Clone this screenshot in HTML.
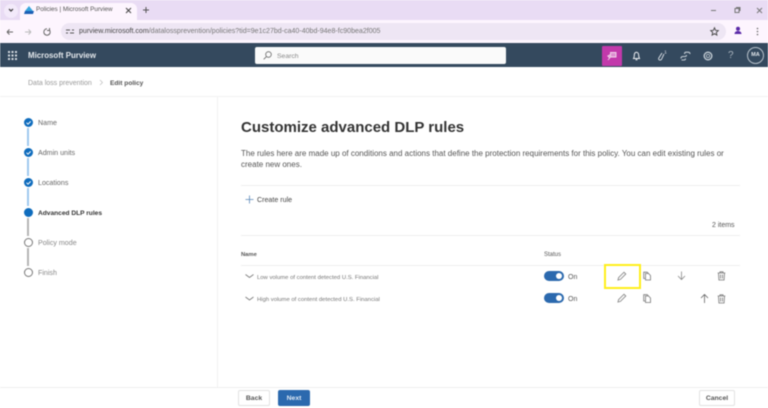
<!DOCTYPE html>
<html><head><meta charset="utf-8">
<style>
*{box-sizing:border-box}
html,body{margin:0;padding:0;background:#fff}
#p{position:relative;width:768px;height:408px;overflow:hidden;background:#fff;font-family:"Liberation Sans",sans-serif;filter:blur(.55px);color:#333}
.a{position:absolute;white-space:nowrap}
svg.a{overflow:visible}
.d{position:absolute;left:24px;width:9px;height:9px;border-radius:50%;background:#0f6cbd}
.o{background:#fff;border:1.5px solid #777}
.l{position:absolute;left:27px;width:2px;height:18px;background:#9fc9ee}
.g{background:#b5b5b5}
.s{left:38px;font-size:7.1px;color:#666}
.t{position:absolute;width:20px;height:10px;border-radius:5px;background:#2b69ae}
.t:after{content:"";position:absolute;right:2px;top:2px;width:6px;height:6px;border-radius:50%;background:#fff}
.r{color:#777}
</style></head><body><div id="p">
<div class="a" style="left:0;top:0;width:768px;height:20px;background:#e9dcf4"></div>
<div class="a" style="left:4px;top:4px;width:14px;height:14px;border-radius:7px;background:#f3eafa"></div>
<svg class="a" style="left:8px;top:8px" width="6" height="5"><path d="M1 1l2 2 2-2" fill="none" stroke="#333" stroke-width="1.2"/></svg>
<div class="a" style="left:20px;top:3px;width:117px;height:18px;background:#fdf5fe;border-radius:6px 6px 0 0"></div>
<svg class="a" style="left:24px;top:6px" width="10" height="9"><path d="M5 0L1 5h8z" fill="#36a6dd"/><path d="M1 5l-1 3h9l1-3z" fill="#1b5fb5"/></svg>
<div class="a" style="left:36px;top:6px;font-size:6.3px;color:#555;line-height:8px">Policies | Microsoft Purview</div>
<svg class="a" style="left:125px;top:7px" width="7" height="7"><path d="M1 1l5 5M6 1l-5 5" stroke="#444" stroke-width="1"/></svg>
<svg class="a" style="left:142px;top:6px" width="8" height="8"><path d="M4 1v6M1 4h6" stroke="#555" stroke-width="1"/></svg>
<svg class="a" style="left:708px;top:7px" width="50" height="7"><path d="M3 3.5h5" stroke="#777"/><path d="M27 1.5h4v4h-4z M28.5 1v-.5h3.500v3.500" fill="none" stroke="#777"/><path d="M50 1l5 5M55 1l-5 5" stroke="#777" transform="translate(-1,0)"/></svg>
<div class="a" style="left:0;top:20px;width:768px;height:23px;background:#fdf5fe"></div>
<svg class="a" style="left:7px;top:27px" width="50" height="10"><path d="M0 5h6M0 5l2.500-2.500M0 5l2.500 2.500" fill="none" stroke="#666"/><path d="M18 5h6M24 5l-2.500-2.500M24 5l-2.500 2.500" fill="none" stroke="#bbb"/><path d="M40 1.800a3.200 3.200 0 1 0 2.500 1.200M42.500 1v2.500h-2.500" fill="none" stroke="#666"/></svg>
<div class="a" style="left:61px;top:23px;width:665px;height:17px;border-radius:9px;background:#eee6f4"></div>
<svg class="a" style="left:66px;top:28px" width="8" height="7"><path d="M0 2h4M6 2h2M0 5h2M4 5h4" stroke="#555"/></svg>
<div class="a" style="left:79px;top:27px;font-size:7.05px;line-height:9px;color:#777"><span style="color:#444">purview.microsoft.com</span>/datalossprevention/policies?tid=9e1c27bd-ca40-40bd-94e8-fc90bea2f005</div>
<svg class="a" style="left:710px;top:27px" width="9" height="9"><path d="M4.500.8l1.100 2.500 2.700.3-2 1.800.6 2.700-2.400-1.400-2.400 1.400.6-2.700-2-1.800 2.700-.3z" fill="none" stroke="#444" stroke-width=".9"/></svg>
<svg class="a" style="left:734px;top:26px" width="8" height="9"><circle cx="4" cy="2.800" r="2" fill="#5b2aa8"/><path d="M.5 8c0-4 7-4 7 0z" fill="#5b2aa8"/></svg>
<svg class="a" style="left:756px;top:27px" width="3" height="9"><circle cx="1.500" cy="1.500" r=".8" fill="#666"/><circle cx="1.500" cy="4.500" r=".8" fill="#666"/><circle cx="1.500" cy="7.500" r=".8" fill="#666"/></svg>

<div class="a" style="left:0;top:43px;width:768px;height:24px;background:#34495e"></div>
<svg class="a" style="left:8px;top:51px" width="9" height="9" fill="#d5dbe1"><rect width="2" height="2"/><rect x="3.500" width="2" height="2"/><rect x="7" width="2" height="2"/><rect y="3.500" width="2" height="2"/><rect x="3.500" y="3.500" width="2" height="2"/><rect x="7" y="3.500" width="2" height="2"/><rect y="7" width="2" height="2"/><rect x="3.500" y="7" width="2" height="2"/><rect x="7" y="7" width="2" height="2"/></svg>
<div class="a" style="left:28px;top:51px;font-size:7.9px;line-height:10px;font-weight:bold;color:#e4e8ec">Microsoft Purview</div>
<div class="a" style="left:255px;top:47px;width:251px;height:17px;background:#fafafa;border-radius:2px"></div>
<svg class="a" style="left:263px;top:51px" width="9" height="9"><circle cx="5.500" cy="3.500" r="2.800" fill="none" stroke="#666" stroke-width=".8"/><path d="M3.500 5.500L.7 8.300" stroke="#666" stroke-width=".8"/></svg>
<div class="a" style="left:277px;top:52px;font-size:6.8px;line-height:9px;color:#888">Search</div>
<div class="a" style="left:602px;top:46px;width:20px;height:20px;background:#c239ab;border-radius:1px"></div>
<svg class="a" style="left:607px;top:51px" width="10" height="10"><path d="M3.500 1.500h5.500v4.500h-5.500zM1 9l2.500-3M3.500 3.500L.8 5l2 2" fill="#dc8fd0" stroke="#f3d7ed" stroke-width=".9"/></svg>
<svg class="a" style="left:632px;top:51px" width="9" height="10"><path d="M4.500 1.200C3 1.200 2.300 2.500 2.300 4.500S1.800 6.800 1.500 7.500h6C7.200 6.800 6.700 6 6.700 4.500S6 1.200 4.500 1.200zM3.500 8.800h2" fill="none" stroke="#eef0f3" stroke-width="1"/></svg>
<svg class="a" style="left:656px;top:49px" width="13" height="13"><path d="M6 4L2.800 9c-1 2 1.700 2.700 2.800 1.200L8 5" fill="none" stroke="#dfe4e9" stroke-width=".9"/><text x="8.300" y="4.700" font-size="4.500" fill="#dfe4e9" font-family="Liberation Sans">1</text></svg>
<svg class="a" style="left:680px;top:51px" width="11" height="10"><path d="M1 7.500c0-1.500 1-2 2-2h2c1 0 1.500-.8 1.500-1.500M10 3c0-1.200-1-1.800-2-1.800H6C5 1.200 4.500 2 4.500 3M1.500 9h2.500c.8 0 1.500-.5 1.500-1.500" fill="none" stroke="#c3ccd4" stroke-width="1.100"/></svg>
<svg class="a" style="left:703px;top:51px" width="10" height="10"><circle cx="5" cy="5" r="3.800" fill="none" stroke="#c3ccd4" stroke-width="1.400"/><circle cx="5" cy="5" r="1.600" fill="none" stroke="#c3ccd4" stroke-width=".8"/></svg>
<div class="a" style="left:728px;top:50px;font-size:10px;line-height:12px;color:#aab5bf">?</div>
<div class="a" style="left:747px;top:47px;width:17px;height:17px;border-radius:50%;border:1px solid #b8c2cb;color:#dfe4e9;font-size:5.6px;line-height:15px;text-align:center;font-weight:bold">MA</div>

<div class="a" style="left:28px;top:79px;font-size:7px;line-height:9px;color:#999">Data loss prevention</div>
<svg class="a" style="left:99px;top:79px" width="5" height="7"><path d="M1 1l2.500 2.500L1 6" fill="none" stroke="#bbb" stroke-width=".7"/></svg>
<div class="a" style="left:110px;top:79px;font-size:6.6px;line-height:9px;font-weight:bold;color:#555">Edit policy</div>
<div class="a" style="left:0;top:96px;width:768px;height:1px;background:#f2f2f2"></div>
<div class="a" style="left:217px;top:97px;width:1px;height:291px;background:#f2f2f2"></div>

<div class="l" style="top:128px"></div><div class="l" style="top:158px"></div><div class="l" style="top:188px"></div>
<div class="l g" style="top:218px"></div><div class="l g" style="top:248px"></div>
<div class="d" style="top:118px"></div><div class="d" style="top:148px"></div><div class="d" style="top:178px"></div><div class="d" style="top:208px"></div>
<div class="d o" style="top:238px"></div><div class="d o" style="top:268px"></div>
<svg class="a" style="left:24px;top:118px" width="9" height="69" fill="none" stroke="#fff" stroke-width="1"><path d="M2.500 4.700l1.500 1.500 2.700-2.800M2.500 34.700l1.500 1.500 2.700-2.800M2.500 64.700l1.500 1.500 2.700-2.800"/></svg>
<div class="a s" style="top:119px;line-height:9px">Name</div>
<div class="a s" style="top:149px;line-height:9px">Admin units</div>
<div class="a s" style="top:179px;line-height:9px">Locations</div>
<div class="a s" style="top:209px;line-height:9px;font-weight:bold;color:#333;font-size:6.6px">Advanced DLP rules</div>
<div class="a s" style="top:239px;line-height:9px;color:#888">Policy mode</div>
<div class="a s" style="top:269px;line-height:9px;color:#888">Finish</div>

<div class="a" style="left:241px;top:118px;font-size:15px;line-height:20px;font-weight:bold;color:#333">Customize advanced DLP rules</div>
<div class="a" style="left:241px;top:148px;width:500px;font-size:8px;line-height:11px;color:#555;white-space:normal">The rules here are made up of conditions and actions that define the protection requirements for this policy. You can edit existing rules or create new ones.</div>
<div class="a" style="left:241px;top:185px;width:499px;height:1px;background:#eee"></div>
<svg class="a" style="left:245px;top:195px" width="9" height="9"><path d="M4.500 .5v8M.5 4.500h8" stroke="#5a88b8" stroke-width=".8"/></svg>
<div class="a" style="left:257px;top:196px;font-size:7.100px;line-height:9px;color:#444">Create rule</div>
<div class="a" style="left:712px;top:221px;font-size:7px;line-height:9px;color:#555">2 items</div>
<div class="a" style="left:241px;top:235px;width:499px;height:1px;background:#eee"></div>
<div class="a" style="left:241px;top:251px;font-size:5.800px;line-height:8px;font-weight:bold;color:#555">Name</div>
<div class="a" style="left:544px;top:251px;font-size:6px;line-height:8px;color:#555">Status</div>
<div class="a" style="left:241px;top:265px;width:499px;height:1px;background:#eee"></div>
<svg class="a" style="left:245px;top:274px" width="9" height="28" fill="none" stroke="#777" stroke-width=".8"><path d="M.5 .5l4 3 4-3M.5 23l4 3 4-3"/></svg>
<div class="a r" style="left:257px;top:274px;line-height:8px;font-size:5.9px">Low volume of content detected U.S. Financial</div>
<div class="a r" style="left:257px;top:296px;line-height:8px;font-size:5.9px">High volume of content detected U.S. Financial</div>
<div class="t" style="left:544px;top:271px"></div><div class="t" style="left:544px;top:293px"></div>
<div class="a" style="left:568px;top:273px;font-size:7px;line-height:9px;color:#555">On</div>
<div class="a" style="left:568px;top:295px;font-size:7px;line-height:9px;color:#555">On</div>
<div class="a" style="left:604px;top:264px;width:37px;height:25px;border:2px solid #ffef1a"></div>
<svg class="a" style="left:617px;top:271px" width="10" height="32" fill="none" stroke="#888" stroke-width=".9"><path d="M1 9l.6-2.400L7 1.200l1.800 1.800-5.400 5.400zM1 31l.6-2.400L7 23.200l1.800 1.800-5.400 5.400z"/></svg>
<svg class="a" style="left:643px;top:271px" width="9" height="33" fill="none" stroke="#777" stroke-width=".8"><path d="M2 7.500H.7V1.200h3.500L5.500 2.500M2.500 2.500h3l2 2v4.500h-5zM2 30H.7v-6.300h3.500L5.500 25M2.500 25h3l2 2v4.500h-5z"/></svg>
<svg class="a" style="left:677px;top:271px" width="9" height="10" fill="none" stroke="#888" stroke-width=".8"><path d="M4.500 .5v8M1 5l3.500 3.500L8 5"/></svg>
<svg class="a" style="left:700px;top:293px" width="9" height="11" fill="none" stroke="#666" stroke-width=".8"><path d="M4.500 10V1.500M1 5l3.500-3.500L8 5"/></svg>
<svg class="a" style="left:717px;top:271px" width="9" height="33" fill="none" stroke="#777" stroke-width=".8"><path d="M.7 2h7.600M3 2V.8h3V2M1.500 2l.4 7h5.200l.4-7M3.500 3.500v4M5.500 3.500v4M.7 25h7.600M3 25v-1.200h3V25M1.500 25l.4 7h5.200l.4-7M3.500 26.500v4M5.500 26.500v4"/></svg>

<div class="a" style="left:0;top:387px;width:768px;height:1px;background:#eee"></div>
<div class="a" style="left:238px;top:390px;width:32px;height:16px;border:1px solid #e2e2e2;border-radius:2px;text-align:center;font-size:6.800px;line-height:15px;font-weight:bold;color:#555">Back</div>
<div class="a" style="left:278px;top:390px;width:32px;height:16px;background:#2b69ae;border-radius:2px;text-align:center;font-size:6.800px;line-height:17px;font-weight:bold;color:#dfe9f4">Next</div>
<div class="a" style="left:699px;top:390px;width:36px;height:16px;border:1px solid #e2e2e2;border-radius:2px;text-align:center;font-size:6.800px;line-height:15px;font-weight:bold;color:#555">Cancel</div>
</div></body></html>
